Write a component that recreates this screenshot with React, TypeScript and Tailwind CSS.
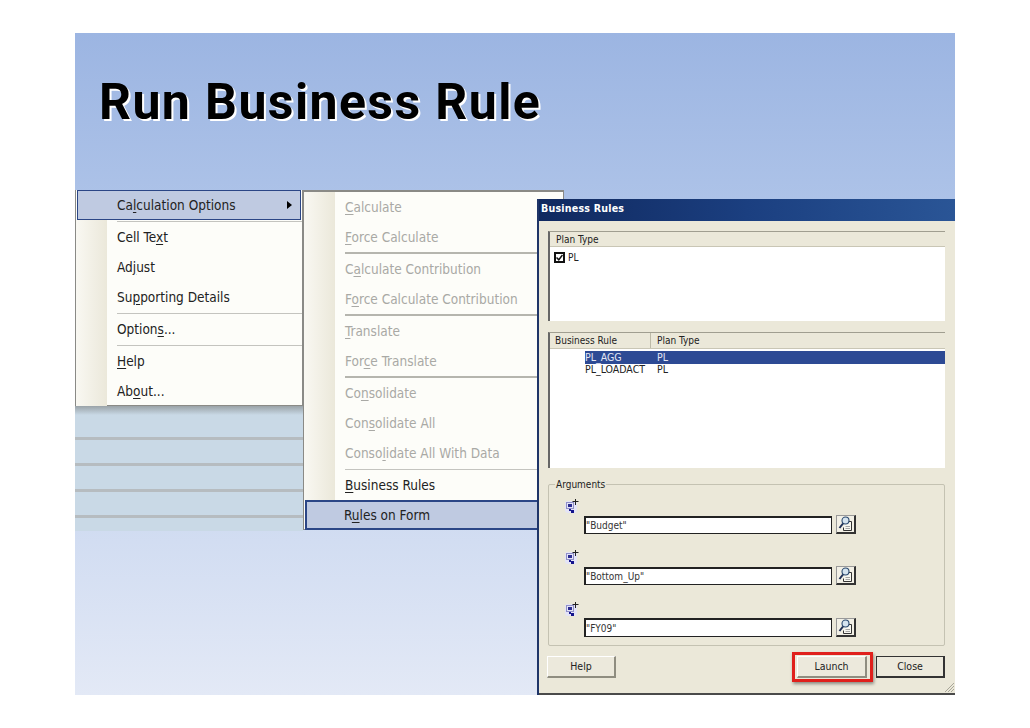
const menuFont = "font-['DejaVu_Sans_Condensed','DejaVu_Sans',sans-serif]"

type Label = [string, string, string]

function Mnemonic({ label }: { label: Label }) {
  return (
    <span>
      {label[0]}
      <span className="underline underline-offset-2">{label[1]}</span>
      {label[2]}
    </span>
  )
}

function MenuRow({ label, disabled, active, arrow, stripe, heavy }: { label: Label; disabled?: boolean; active?: boolean; arrow?: boolean; stripe: string; heavy?: boolean }) {
  if (active) {
    return (
      <div className={`h-[30px] flex items-center bg-[#bfcae1] mx-px text-[#222] border-[#2b4686] ${heavy ? "border-2" : "border"}`}>
        <div className={`${stripe} shrink-0`} />
        <div className="pl-[10px] flex-1"><Mnemonic label={label} /></div>
        {arrow && <div className="w-0 h-0 mr-[8px] border-y-[4px] border-y-transparent border-l-[5px] border-l-black" />}
      </div>
    )
  }
  return (
    <div className={`h-[30px] flex items-center ${disabled ? "text-[#a9a9a5]" : "text-[#222]"}`}>
      <div className={`${stripe} h-full shrink-0 bg-gradient-to-r from-[#f9f8f2] to-[#ebe8da]`} />
      <div className="pl-[10px]"><Mnemonic label={label} /></div>
    </div>
  )
}

function MenuSep({ stripe, thick }: { stripe: string; thick?: boolean }) {
  return (
    <div className="h-[2px] flex">
      <div className={`${stripe} shrink-0 bg-gradient-to-r from-[#f9f8f2] to-[#ebe8da]`} />
      <div className={`ml-[10px] flex-1 ${thick ? "bg-[#b5b5ae]" : "border-b border-[#c4c4bf]"}`} />
    </div>
  )
}

function MainMenu() {
  const stripe = "w-[31px]"
  return (
    <div className={`w-[228px] h-[216px] bg-[#fdfdf9] border-x border-b border-[#8a8a86] text-[13.5px] ${menuFont}`}>
      <MenuRow label={["Ca", "l", "culation Options"]} active arrow stripe="w-[29px]" />
      <MenuSep stripe={stripe} />
      <MenuRow label={["Cell Te", "x", "t"]} stripe={stripe} />
      <MenuRow label={["Ad", "j", "ust"]} stripe={stripe} />
      <MenuRow label={["Su", "p", "porting Details"]} stripe={stripe} />
      <MenuSep stripe={stripe} />
      <MenuRow label={["Option", "s", "..."]} stripe={stripe} />
      <MenuSep stripe={stripe} />
      <MenuRow label={["", "H", "elp"]} stripe={stripe} />
      <MenuRow label={["Ab", "o", "ut..."]} stripe={stripe} />
    </div>
  )
}

function CalcMenu() {
  const stripe = "w-[31px]"
  return (
    <div className={`relative z-10 w-[261px] h-[340px] bg-[#fdfdf9] border-t-2 border-x border-b border-[#8a8a86] text-[13.5px] ${menuFont}`}>
      <MenuRow label={["", "C", "alculate"]} disabled stripe={stripe} />
      <MenuRow label={["", "F", "orce Calculate"]} disabled stripe={stripe} />
      <MenuSep stripe={stripe} thick />
      <MenuRow label={["C", "a", "lculate Contribution"]} disabled stripe={stripe} />
      <MenuRow label={["F", "o", "rce Calculate Contribution"]} disabled stripe={stripe} />
      <MenuSep stripe={stripe} thick />
      <MenuRow label={["", "T", "ranslate"]} disabled stripe={stripe} />
      <MenuRow label={["For", "c", "e Translate"]} disabled stripe={stripe} />
      <MenuSep stripe={stripe} thick />
      <MenuRow label={["Co", "n", "solidate"]} disabled stripe={stripe} />
      <MenuRow label={["Con", "s", "olidate All"]} disabled stripe={stripe} />
      <MenuRow label={["Conso", "l", "idate All With Data"]} disabled stripe={stripe} />
      <MenuSep stripe={stripe} />
      <MenuRow label={["", "B", "usiness Rules"]} stripe={stripe} />
      <MenuRow label={["R", "u", "les on Form"]} active heavy stripe="w-[27px]" />
    </div>
  )
}

function ArgIcon() {
  return (
    <svg width="16" height="16" viewBox="0 0 16 16" className="block">
      <rect x="1" y="3" width="12" height="12" rx="3" fill="#e4e4f6" />
      <rect x="2.5" y="4.5" width="7" height="6" fill="none" stroke="#3a3a9a" strokeDasharray="1 1" />
      <rect x="4" y="6" width="4" height="3" fill="#2a2a90" />
      <rect x="5" y="11" width="2" height="2" fill="#1a1a90" />
      <rect x="7" y="12" width="3" height="3" fill="#14148c" />
      <path d="M11.5 1v6M8.5 3.5h6" stroke="#222" strokeWidth="1" />
    </svg>
  )
}

function LookupIcon() {
  return (
    <svg width="16" height="16" viewBox="0 0 16 16" className="block">
      <path d="M9 5.5h4.5v9H5.5v-3" fill="#f7f7f0" stroke="#333" />
      <path d="M7.5 10.5h4.5M7.5 12.5h4.5" stroke="#a5a5a5" />
      <circle cx="7.5" cy="4.5" r="3.5" fill="#d5e4ef" stroke="#2b4a70" strokeWidth="1.1" />
      <path d="M5 7.5L1.5 12" stroke="#1e2f55" strokeWidth="2" />
    </svg>
  )
}

function Argument({ value, top, boxH }: { value: string; top: string; boxH: string }) {
  return (
    <div className={top}>
      <div className="pl-[15px]"><ArgIcon /></div>
      <div className="flex items-center mt-[1px] pl-[35px]">
        <div className={`w-[248px] ${boxH} bg-white border-t-2 border-l-2 border-b border-r border-[#222] flex items-center text-[#333]`}>{value}</div>
        <div className="ml-[4px] w-[20px] h-[19px] bg-[#f2f0e6] border-r-2 border-b-2 border-[#333] border-t border-l border-t-[#999] border-l-[#999] flex items-center justify-center">
          <LookupIcon />
        </div>
      </div>
    </div>
  )
}

function DlgButton({ label, dark, width }: { label: string; dark?: boolean; width: string }) {
  return (
    <div className={`${width} h-[22px] flex items-center justify-center bg-[#ecE9dc] text-[#222] border-r-2 border-b-2 border-t border-l text-[10.5px] ${dark ? "border-[#333] border-t-[#333] border-l-[#333]" : "border-[#8f8d80] border-t-white border-l-white"}`}>
      {label}
    </div>
  )
}

function BusinessRulesDialog() {
  return (
    <div className={`relative z-20 -ml-[27px] mt-[9px] w-[418px] h-[496px] flex flex-col bg-[#ebe8d9] border-l-2 border-[#1f3568] text-[10px] ${menuFont}`}>
      <div className="h-[22px] shrink-0 flex items-center pb-[2px] pl-[2px] bg-gradient-to-r from-[#10295f] via-[#1b3f80] to-[#2a5596] text-white font-bold text-[10.6px] tracking-[0.2px]">
        Business Rules
      </div>
      <div className="flex-1 flex flex-col pl-[9px] pr-[10px] border-b-2 border-[#4a4a4a]">
        <div className="mt-[10px] h-[90px] bg-white border-l-2 border-t border-l-[#666] border-t-[#a09e90] flex flex-col">
          <div className="h-[15px] shrink-0 bg-[#ebe8d9] border-b border-[#c9c6b5] pl-[6px] flex items-center text-[#222]">Plan Type</div>
          <div className="flex items-center gap-[3px] pl-[4px] mt-[3px] text-[#222]">
            <span className="w-[11px] h-[11px] border-2 border-[#111] flex items-center justify-center">
              <svg width="7" height="7" viewBox="0 0 7 7"><path d="M0.5 3.5L2.8 5.8L6.5 1" stroke="#111" strokeWidth="1.5" fill="none" /></svg>
            </span>
            PL
          </div>
        </div>
        <div className="mt-[11px] h-[136px] bg-white border-l-2 border-t border-l-[#666] border-t-[#a09e90] flex flex-col">
          <div className="h-[16px] shrink-0 flex bg-[#ebe8d9] border-b border-[#c9c6b5] text-[#222]">
            <div className="w-[101px] pl-[5px] border-r border-[#bdbaa8] flex items-center">Business Rule</div>
            <div className="pl-[6px] flex items-center">Plan Type</div>
          </div>
          <div className="mt-[2px] h-[13px] ml-[35px] flex items-center bg-[#2d4a94] text-[#e4e8f4] text-[10.5px]">
            <span className="w-[72px]">PL_AGG</span>PL
          </div>
          <div className="h-[12px] ml-[35px] flex items-center text-[#222] text-[10.5px]">
            <span className="w-[72px]">PL_LOADACT</span>PL
          </div>
        </div>
        <div className="relative mt-[16px] h-[162px] border border-[#c4c2b2] rounded-[2px]">
          <span className="absolute -top-[7px] left-[6px] px-px bg-[#ebe8d9] leading-[13px] text-[#222]">Arguments</span>
          <Argument value={'"Budget"'} top="pt-[13px]" boxH="h-[18px]" />
          <Argument value={'"Bottom_Up"'} top="mt-[15px]" boxH="h-[18px]" />
          <Argument value={'"FY09"'} top="mt-[16px]" boxH="h-[19px]" />
        </div>
        <div className="mt-[10px] flex items-center">
          <div className="-ml-px"><DlgButton label="Help" width="w-[69px]" /></div>
          <div className="ml-auto relative">
            <DlgButton label="Launch" width="w-[70px]" />
            <div className="absolute -left-[5px] -right-[6px] -inset-y-[4px] border-[3px] border-[#e0201c] shadow-[1px_2px_3px_rgba(0,0,0,0.4)]" />
          </div>
          <div className="ml-[9px]"><DlgButton label="Close" dark width="w-[69px]" /></div>
        </div>
      </div>
      <svg width="12" height="12" viewBox="0 0 12 12" className="absolute bottom-[2px] right-0">
        <path d="M11 2L2 11M11 5L5 11M11 8L8 11" stroke="#a8a698" strokeWidth="1" />
      </svg>
    </div>
  )
}

export default function App() {
  return (
    <div className="w-[1030px] h-[728px] bg-white pt-[33px] pl-[75px]">
      <div className="w-[880px] h-[662px] overflow-hidden bg-gradient-to-b from-[#9cb5e2] via-[#b0c5e9] via-30% to-[#e3e9f6]">
        <h1 className="h-[157px] pl-[24px] pt-[34px] font-['Roboto',sans-serif] font-bold text-[50px] leading-[70px] text-black [text-shadow:2px_2px_0_#fff] tracking-[1.4px]">
          Run Business Rule
        </h1>
        <div className="flex items-start">
          <div className="w-[228px] shrink-0 flex flex-col">
            <MainMenu />
            <div className="h-[125px] bg-[#c9d9e6] flex flex-col">
              <div className="h-[9px] bg-gradient-to-b from-[#9aa3a8] to-[#c9d9e6]" />
              {[0, 1, 2, 3].map((i) => (
                <div key={i} className={`${i === 0 ? "h-[25px]" : "h-[26px]"} border-b-[3px] border-[#b6bcc0]`} />
              ))}
            </div>
          </div>
          <CalcMenu />
          <BusinessRulesDialog />
        </div>
      </div>
    </div>
  )
}
